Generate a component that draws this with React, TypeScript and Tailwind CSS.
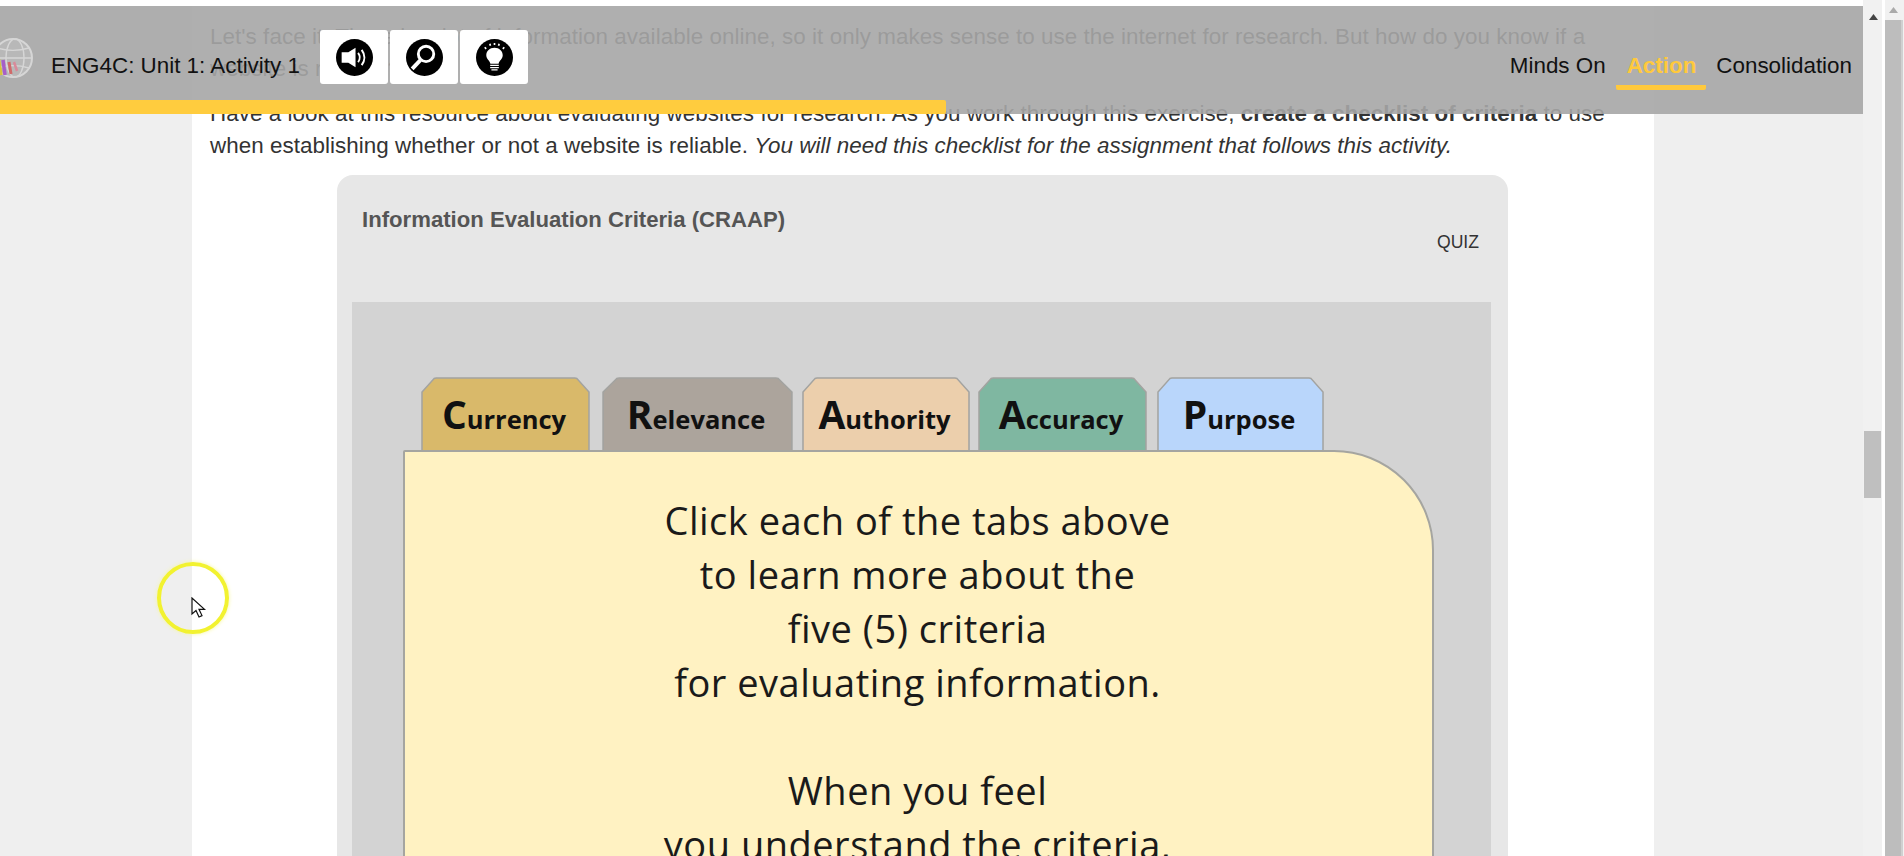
const sans = "font-['Liberation_Sans',Arial,sans-serif]";
const open = "font-['Open_Sans','Noto_Sans',sans-serif]";

function Arrow({ className }: { className: string }) {
  return (
    <svg width="9" height="6" viewBox="0 0 9 6" className={className}>
      <polygon points="4.5,0 9,6 0,6" fill="currentColor" />
    </svg>
  );
}

function Speaker() {
  return (
    <svg width="37" height="37" viewBox="0 0 36 36">
      <circle cx="18" cy="18" r="18" fill="#000" />
      <polygon points="5.5,13 12,13 19,8.5 19,27.5 12,23 5.5,23" fill="#fff" />
      <path d="M21.5 13.5c2 2.8 2 6.2 0 9" stroke="#fff" strokeWidth="1.8" fill="none" />
      <path d="M25 10.5c3.4 4.6 3.4 10.4 0 15" stroke="#fff" strokeWidth="2" fill="none" />
    </svg>
  );
}

function Magnifier() {
  return (
    <svg width="37" height="37" viewBox="0 0 36 36">
      <circle cx="18" cy="18" r="18" fill="#000" />
      <circle cx="19.5" cy="14.5" r="7.5" stroke="#fff" strokeWidth="2.8" fill="none" />
      <path d="M14 20.5L6 29" stroke="#fff" strokeWidth="3.8" />
    </svg>
  );
}

function Bulb() {
  return (
    <svg width="37" height="37" viewBox="0 0 36 36">
      <circle cx="18" cy="18" r="18" fill="#000" />
      <path d="M18 8.5c-4.6 0-8 3.2-8 7.3 0 3.7 3.3 5 4 8.2h8c.7-3.2 4-4.5 4-8.2 0-4.1-3.4-7.3-8-7.3z" fill="#fff" />
      <path d="M13.8 25.6h8.4M13.8 27.8h8.4M15 30h6" stroke="#fff" strokeWidth="1.3" />
      <path d="M8.5 8l1.4 1.6M13.5 4.6l.5 2M22.5 4.6l-.5 2M27.5 8l-1.4 1.6M18 3.8v2" stroke="#fff" strokeWidth="1.6" />
    </svg>
  );
}

function Globe() {
  return (
    <svg width="40" height="40" viewBox="0 0 40 40" className="ml-[-7px] mt-[32px] shrink-0">
      <circle cx="20" cy="20" r="19" fill="#b8b8b8" stroke="#d6d6d6" strokeWidth="2" />
      <ellipse cx="22" cy="20" rx="9" ry="19" fill="none" stroke="#d6d6d6" strokeWidth="1.4" />
      <path d="M4 10c10 3 22 3 32 0M1 20h38M4 30c10-3 22-3 32 0" stroke="#d6d6d6" strokeWidth="1.4" fill="none" />
      <path d="M5 19l3 18" stroke="#d8c23a" strokeWidth="3.5" />
      <path d="M10 22l2 15" stroke="#a65fc8" strokeWidth="3.5" />
      <path d="M16 24l2 12" stroke="#d06a6a" strokeWidth="3" />
      <path d="M21 24l3 9" stroke="#d98a9a" strokeWidth="2.5" />
    </svg>
  );
}

function Tab({ label, rest, width, ml, fill }: { label: string; rest: string; width: string; ml: string; fill: string }) {
  return (
    <div className={`relative h-[73px] shrink-0 ${width} ${ml}`}>
      <svg className="absolute inset-0 h-full w-full" viewBox="0 0 168 73" preserveAspectRatio="none">
        <path d="M1 74V15L13 1.5Q14 1 15 1H153Q154 1 155 1.5L167 15V74Z" fill={fill} stroke="#a3a3a0" strokeWidth="1.5" />
      </svg>
      <div className={`relative flex h-full items-baseline justify-center pr-[3px] pt-[12px] font-bold text-[#111] ${open}`}>
        <span className="text-[39px] leading-[50px]">{label}</span>
        <span className="text-[25.5px] leading-[50px]">{rest}</span>
      </div>
    </div>
  );
}

export default function App() {
  return (
    <div className={`flex h-[856px] w-[1904px] overflow-hidden bg-white ${sans}`}>
      <div className="relative flex w-[1863px] shrink-0 flex-col">
        <div className="h-[6px] shrink-0 bg-white" />
        <div className="flex min-h-0 flex-1 overflow-hidden bg-[#efefef] pl-[192px]">
          <main className="w-[1462px] shrink-0 bg-white pl-[18px] pr-[18px] pt-[15px] text-[22.4px] leading-[32px] text-[#333]">
            <p className="whitespace-nowrap tracking-[0.05px]">
              Let's face it. There is a lot of information available online, so it only makes sense to use the internet for research. But how do you know if a
              <br />
              website is reliable?
            </p>
            <p className="mt-[13px] whitespace-nowrap tracking-[0.05px]">
              Have a look at this resource about evaluating websites for research. As you work through this exercise, <b>create a checklist of criteria</b> to use
              <br />
              when establishing whether or not a website is reliable. <i>You will need this checklist for the assignment that follows this activity.</i>
            </p>
            <section className="ml-[127px] mt-[13px] w-[1171px] rounded-t-[16px] bg-[#e7e7e7]">
              <div className="h-[127px] pl-[25px] pr-[29px] pt-[29px]">
                <h2 className="text-[22.15px] font-bold leading-[32px] text-[#555]">Information Evaluation Criteria (CRAAP)</h2>
                <div className="mt-[-4px] text-right text-[17.6px] leading-[20px] text-[#333]">QUIZ</div>
              </div>
              <div className="ml-[15px] mr-[17px] h-[700px] bg-[#d3d3d3] pl-[51px] pr-[57px] pt-[75px]">
                <div className="flex pl-[18px]">
                  <Tab label="C" rest="urrency" width="w-[169px]" ml="ml-0" fill="#d9b96a" />
                  <Tab label="R" rest="elevance" width="w-[191px]" ml="ml-[12px]" fill="#aca49c" />
                  <Tab label="A" rest="uthority" width="w-[168px]" ml="ml-[9px]" fill="#eccfac" />
                  <Tab label="A" rest="ccuracy" width="w-[169px]" ml="ml-[8px]" fill="#7fb7a1" />
                  <Tab label="P" rest="urpose" width="w-[167px]" ml="ml-[10px]" fill="#b9d6fb" />
                </div>
                <div className={`h-[500px] rounded-tl-[2px] rounded-tr-[100px] border-2 border-[#a5a5a0] bg-[#fff2c2] pr-[2px] pt-[40.5px] text-center text-[38px] leading-[54px] tracking-[0.5px] text-[#1a1a1a] ${open}`}>
                  Click each of the tabs above
                  <br />
                  to learn more about the
                  <br />
                  five (5) criteria
                  <br />
                  for evaluating information.
                  <br />
                  <br />
                  When you feel
                  <br />
                  you understand the criteria,
                </div>
              </div>
            </section>
          </main>
        </div>

        <header className="absolute left-0 top-[6px] flex h-[108px] w-[1863px] flex-col overflow-hidden bg-[#a6a6a6]/90">
          <div className="flex h-[94px] shrink-0">
            <Globe />
            <div className="ml-[18px] mt-[45px] w-[269px] shrink-0 text-[22.4px] leading-[30px] text-[#111]">ENG4C: Unit 1: Activity 1</div>
            <div className="mt-[24px] flex h-[54px] gap-[2px]">
              <button className="flex h-[54px] w-[68px] items-center justify-center rounded-[3px] bg-white"><Speaker /></button>
              <button className="flex h-[54px] w-[68px] items-center justify-center rounded-[3px] bg-white"><Magnifier /></button>
              <button className="flex h-[54px] w-[68px] items-center justify-center rounded-[3px] bg-white"><Bulb /></button>
            </div>
            <nav className="ml-auto mt-[45px] flex h-[39px] text-[22.4px] leading-[30px] text-[#111]">
              <a className="pl-[11px] pr-[10px]">Minds On</a>
              <a className="h-[39px] rounded-b-[2px] border-b-[5px] border-[#ffc93c] pl-[11px] pr-[10px] font-bold text-[#ffc93c]">Action</a>
              <a className="pl-[10px] pr-[11px]">Consolidation</a>
            </nav>
          </div>
          <div className="h-[14px] w-[946px] shrink-0 rounded-r-[2px] bg-[#ffcc3e]" />
        </header>

        <div className="absolute left-[157px] top-[562px] h-[72px] w-[72px] rounded-full border-[4px] border-[#f2f230] shadow-[0_0_4px_#f6f6a0]" />
        <svg className="absolute left-[191px] top-[597px]" width="16" height="22" viewBox="0 0 16 22">
          <path d="M1 1v16l4-3.5 3 6.5 3-1.4-3-6.3h5.5z" fill="#fff" stroke="#111" strokeWidth="1.2" />
        </svg>
      </div>

      <aside className="flex w-[19px] shrink-0 flex-col bg-[#f1f1f1] pl-[1px]">
        <Arrow className="ml-[5px] mt-[14px] text-[#444]" />
        <div className="mt-[411px] h-[67px] w-[17px] bg-[#bfbfbf]" />
      </aside>
      <div className="w-[3px] shrink-0 bg-white" />
      <aside className="flex w-[19px] shrink-0 flex-col bg-[#f1f1f1]">
        <Arrow className="ml-[4px] mt-[7px] text-[#aaa]" />
        <div className="mt-[7px] h-[836px] w-[18px] border-r-2 border-[#d0d0d0] bg-[#bdbdbd]" />
      </aside>
    </div>
  );
}
